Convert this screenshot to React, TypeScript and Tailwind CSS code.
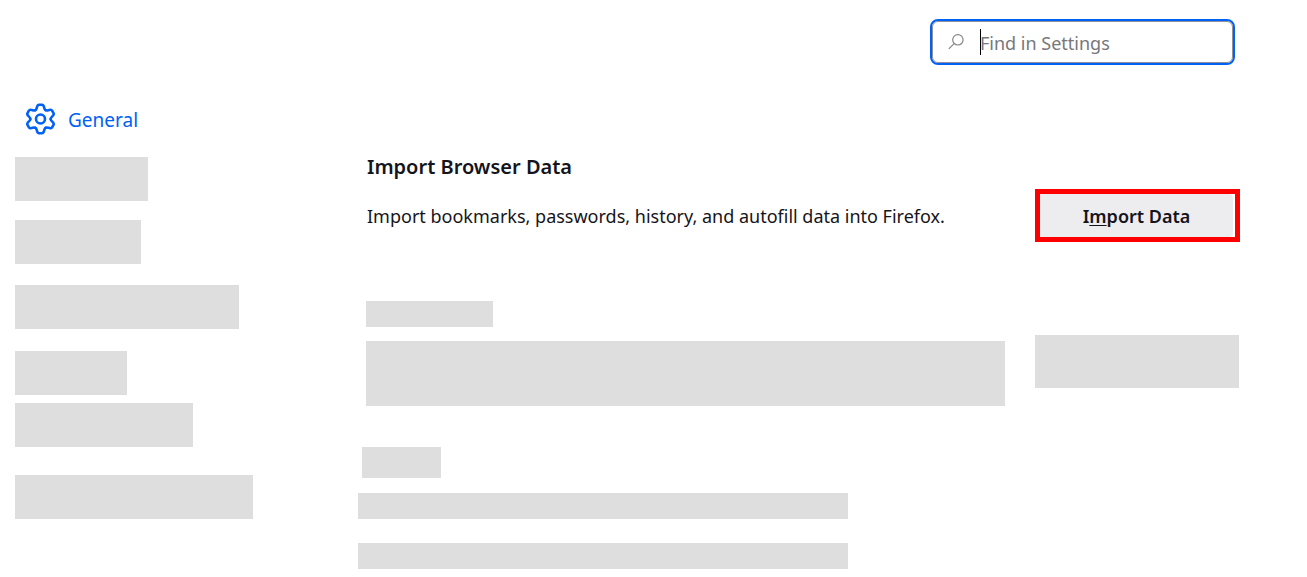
import type React from "react";
import clsx from "clsx";

const TOOTH = "M-5.1-8.8C-4.4-9.2-4-9.8-3.7-11.2Q-3.1-14.2-1.4-14.2H1.4Q3.1-14.2 3.7-11.2C4-9.8 4.4-9.2 5.1-8.8";
const TOOTH_ANGLES = [0, 60, 120, 180, 240, 300];

const NAV_PLACEHOLDERS = [
  "mt-[22px] w-[133px]",
  "mt-[19px] w-[126px]",
  "mt-[21px] w-[224px]",
  "mt-[22px] w-[112px]",
  "mt-2 w-[178px]",
  "mt-7 w-[238px]",
];

const GearIcon: React.FC = () => (
  <svg className="size-8 shrink-0" viewBox="-16.5 -16 32 32" fill="none" stroke="currentColor" strokeWidth="2.6" aria-hidden="true">
    {TOOTH_ANGLES.map((angle) => (
      <path key={angle} d={TOOTH} transform={`rotate(${angle})`} strokeLinecap="round" strokeLinejoin="round" />
    ))}
    <circle r="4.5" />
  </svg>
);

const SearchIcon: React.FC = () => (
  <svg className="size-4 shrink-0 text-[#85858a]" viewBox="0 0 16 16" fill="none" stroke="currentColor" strokeWidth="1.2" aria-hidden="true">
    <circle cx="9.9" cy="5.8" r="5.2" />
    <path d="M6.1 9.6L.8 14.9" />
  </svg>
);

const Placeholder: React.FC<{ className: string }> = ({ className }) => (
  <div className={clsx("bg-[#dedede]", className)} />
);

const SearchBox: React.FC = () => (
  <label className="flex h-[46px] w-[305px] items-center rounded-lg border-2 border-[#0061f5] bg-white">
    <span className="flex h-full w-full items-center rounded-md border border-[#8f8f9d] pl-[15px]">
      <SearchIcon />
      <span className="relative ml-4 flex-1">
        <span className="absolute top-0 left-0 h-[26px] w-px bg-black" />
        <input
          type="text"
          aria-label="Find in Settings"
          placeholder="Find in Settings"
          className="block h-[26px] w-full pt-0.5 text-lg leading-6 text-[#15141a] outline-none placeholder:text-[#77777c]"
        />
      </span>
    </span>
  </label>
);

const Sidebar: React.FC = () => (
  <nav className="w-[343px] shrink-0 pt-[38px]">
    <a href="#general" className="flex h-8 items-center gap-3 pl-[9px] text-[#0061f5]">
      <GearIcon />
      <span className="pt-0.5 text-[19px] leading-7">General</span>
    </a>
    {NAV_PLACEHOLDERS.map((size) => (
      <Placeholder key={size} className={clsx("h-11", size)} />
    ))}
  </nav>
);

const App: React.FC = () => {
  return (
    <div className="bg-white pb-2 font-['Noto_Sans','Open_Sans',sans-serif] text-[#15141a]">
      <header className="flex justify-end pt-[19px] pr-[72px]">
        <SearchBox />
      </header>

      <div className="flex pl-[15px]">
        <Sidebar />

        <main className="min-w-0 flex-1 pt-[88px] pr-[67px]">
          <section className="pl-2">
            <h1 className="h-9 pl-px text-xl leading-7 font-semibold">Import Browser Data</h1>
            <div className="flex items-center justify-between">
              <p className="pl-px text-lg leading-7">
                Import bookmarks, passwords, history, and autofill data into Firefox.
              </p>
              <div className="w-[205px] shrink-0 border-[5px] border-[#ff0000] bg-white pr-0.5">
                <button type="button" className="block h-[43px] w-full rounded-r bg-[#ededf0] text-lg font-semibold">
                  I<span className="underline decoration-1 underline-offset-2">m</span>port Data
                </button>
              </div>
            </div>
          </section>

          <section className="pt-[59px] pl-2">
            <Placeholder className="h-[26px] w-[127px]" />
            <div className="flex gap-[30px] pt-2">
              <Placeholder className="mt-[6px] h-[65px] flex-1" />
              <Placeholder className="mr-px h-[53px] w-[204px]" />
            </div>
          </section>

          <section className="pt-[41px]">
            <Placeholder className="ml-1 h-[31px] w-[79px]" />
            <Placeholder className="mt-[15px] h-[26px] w-[490px]" />
            <Placeholder className="mt-6 h-[26px] w-[490px]" />
          </section>
        </main>
      </div>
    </div>
  );
};

export default App;
